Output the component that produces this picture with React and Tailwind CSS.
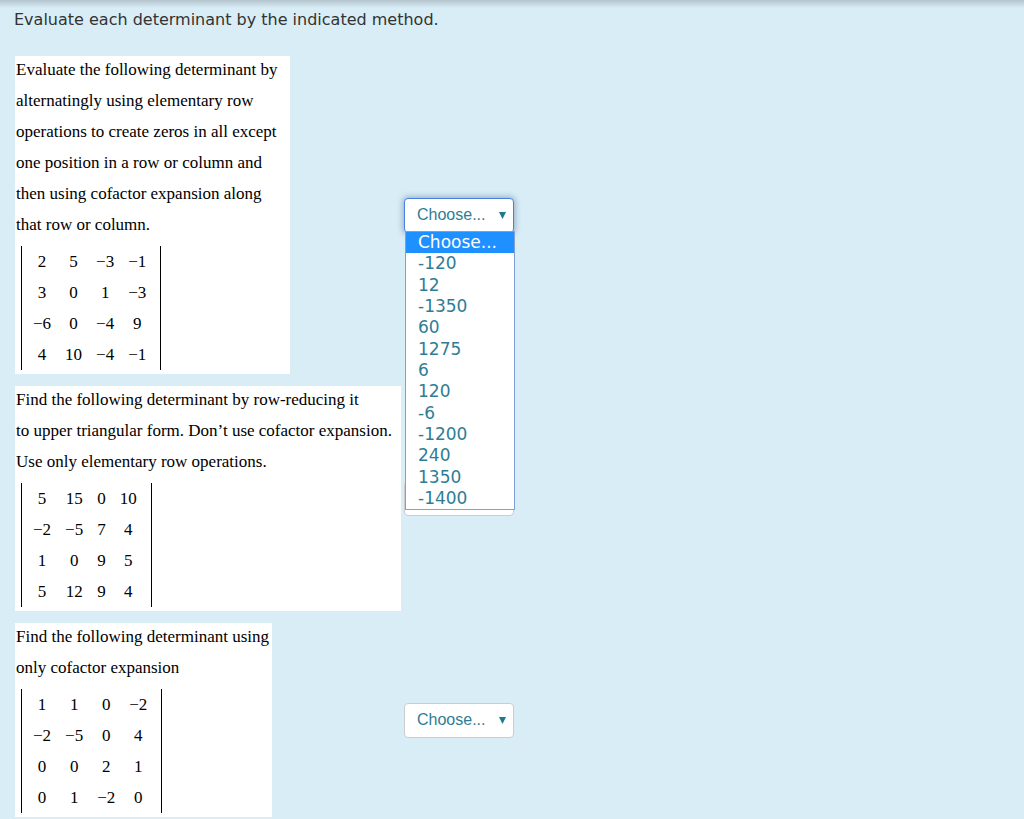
import { useState } from 'react';
import clsx from 'clsx';

const OPTIONS = ['-120', '12', '-1350', '60', '1275', '6', '120', '-6', '-1200', '240', '1350', '-1400'];

const QUESTIONS = [
  {
    id: 'q1',
    lines: [
      'Evaluate the following determinant by',
      'alternatingly using elementary row',
      'operations to create zeros in all except',
      'one position in a row or column and',
      'then using cofactor expansion along',
      'that row or column.',
    ],
    matrix: [
      [2, 5, -3, -1],
      [3, 0, 1, -3],
      [-6, 0, -4, 9],
      [4, 10, -4, -1],
    ],
    width: 'w-[275px]',
  },
  {
    id: 'q2',
    lines: [
      'Find the following determinant by row-reducing it',
      'to upper triangular form. Don’t use cofactor expansion.',
      'Use only elementary row operations.',
    ],
    matrix: [
      [5, 15, 0, 10],
      [-2, -5, 7, 4],
      [1, 0, 9, 5],
      [5, 12, 9, 4],
    ],
    width: 'w-[386px]',
  },
  {
    id: 'q3',
    lines: ['Find the following determinant using', 'only cofactor expansion'],
    matrix: [
      [1, 1, 0, -2],
      [-2, -5, 0, 4],
      [0, 0, 2, 1],
      [0, 1, -2, 0],
    ],
    width: 'w-[257px]',
  },
];

function Matrix({ rows }) {
  return (
    <div className="ml-[5px] mt-2 w-fit border-x border-black pl-1 pr-[7px]">
      <table>
        <tbody>
          {rows.map((row, i) => (
            <tr key={i} className="h-[31px]">
              {row.map((n, j) => (
                <td key={j} className="px-[7px] py-0 text-center align-middle leading-[31px]">
                  {n < 0 ? `−${Math.abs(n)}` : n}
                </td>
              ))}
            </tr>
          ))}
        </tbody>
      </table>
    </div>
  );
}

function Question({ id, lines, matrix, width }) {
  return (
    <div
      className={clsx(
        'bg-white pb-1 pl-px font-["Liberation_Serif",serif] text-[17px] text-black',
        width
      )}
    >
      <label htmlFor={id} className="flex flex-col gap-1">
        {lines.map((line) => (
          <span key={line} className="whitespace-nowrap leading-[27px]">
            {line}
          </span>
        ))}
      </label>
      <Matrix rows={matrix} />
    </div>
  );
}

function AnswerSelect({ id, value, open, onToggle, onPick }) {
  return (
    <div className={clsx('relative w-[110px]', open && 'z-10')}>
      <select
        id={id}
        value={value}
        onChange={(e) => onPick(e.target.value)}
        onMouseDown={(e) => {
          e.preventDefault();
          onToggle();
        }}
        className={clsx(
          'block h-[35px] w-full appearance-none rounded border bg-white pl-3 pr-6 font-["Liberation_Sans",sans-serif] text-base text-[#2f7d95] outline-none',
          open ? 'border-[#4a80dc] shadow-[0_0_6px_1px_#8fa9c8]' : 'border-[#cccccc]'
        )}
      >
        <option value="">Choose...</option>
        {OPTIONS.map((o) => (
          <option key={o} value={o}>
            {o}
          </option>
        ))}
      </select>
      <svg
        className="pointer-events-none absolute right-2 top-[14px] h-[7px] w-[7px] fill-[#1f7890]"
        viewBox="0 0 7 7"
      >
        <path d="M0 0h7L3.5 7z" />
      </svg>

      {open && (
        <ul className="absolute left-px top-[33px] flex h-[279px] w-full flex-col border border-[#7f9fd6] bg-white font-['DejaVu_Sans',sans-serif] text-[17px]">
          {['', ...OPTIONS].map((o) => (
            <li key={o} className="flex flex-1">
              <button
                type="button"
                onClick={() => onPick(o)}
                className={clsx(
                  'flex w-full items-center pl-3 text-left leading-5',
                  o === value ? 'bg-[#1e90ff] text-white' : 'text-[#2f7d95]'
                )}
              >
                {o || 'Choose...'}
              </button>
            </li>
          ))}
        </ul>
      )}
    </div>
  );
}

export default function App() {
  const [answers, setAnswers] = useState({ q1: '', q2: '', q3: '' });
  const [openId, setOpenId] = useState('q1');

  const pick = (id, value) => {
    setAnswers({ ...answers, [id]: value });
    setOpenId(null);
  };

  return (
    <div className="min-h-screen bg-[#d9edf6]">
      <div className="h-2 bg-linear-to-b from-[#b3c4cd] to-[#d9edf6]" />
      <main className="pl-[15px]">
        <p className="-ml-px font-['DejaVu_Sans',sans-serif] text-base leading-6 text-[#333333]">
          Evaluate each determinant by the indicated method.
        </p>
        <div className="mt-6 grid grid-cols-[auto_1fr] items-center gap-x-[3px] gap-y-3">
          {QUESTIONS.map((q) => (
            <div key={q.id} className="contents">
              <Question {...q} />
              <AnswerSelect
                id={q.id}
                value={answers[q.id]}
                open={openId === q.id}
                onToggle={() => setOpenId(openId === q.id ? null : q.id)}
                onPick={(v) => pick(q.id, v)}
              />
            </div>
          ))}
        </div>
      </main>
    </div>
  );
}
